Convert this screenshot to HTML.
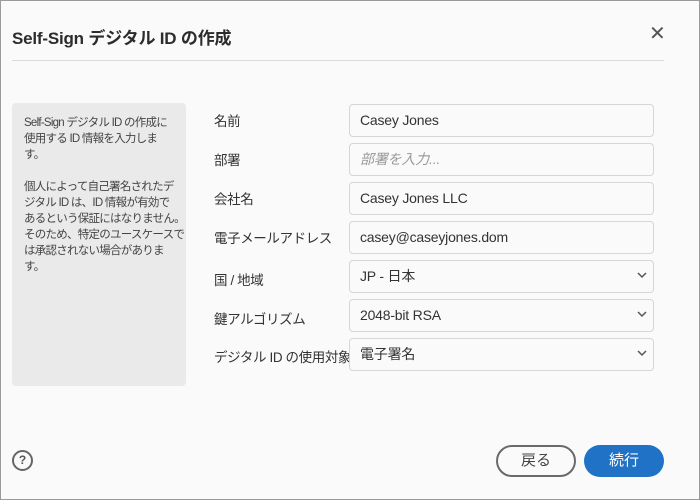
<!DOCTYPE html>
<html><head><meta charset="utf-8"><style>
*{box-sizing:border-box;margin:0;padding:0}
body{width:700px;height:500px;background:#fafafa;font-family:"Liberation Sans","Noto Sans CJK JP",sans-serif;color:#2c2c2c;position:relative;overflow:hidden}
.fr{position:absolute;left:0;top:0;width:700px;height:500px;border:1px solid #9a9a9a}
.t{position:absolute;left:12px;top:24px;font-size:17px;font-weight:bold;color:#2c2c2c;letter-spacing:-0.2px}
.x{position:absolute;left:649px;top:24px;font-size:20px;color:#555;line-height:20px}
.hr{position:absolute;left:12px;top:60px;width:652px;height:1px;background:#dcdcdc}
.p{position:absolute;left:12px;top:103px;width:174px;height:283px;background:#eaeaea;border-radius:4px;padding:12px 0 0 12px;font-size:11.5px;line-height:16px;color:#444;letter-spacing:-0.75px;white-space:nowrap}
.l{position:absolute;left:214px;font-size:13.5px;color:#333;letter-spacing:-0.4px}
.i{position:absolute;left:349px;width:305px;height:33px;border:1px solid #d6d6d6;border-radius:4px;background:#fafafa;font-size:14px;padding-left:10px;line-height:31px;color:#333;letter-spacing:-0.2px}
.i.ph{color:#999;font-style:italic}
.i svg{position:absolute;right:5px;top:8px}
.b{position:absolute;top:445px;height:32px;border-radius:16px;font-size:15px;text-align:center;line-height:28px}
.q{position:absolute;left:12px;top:450px;width:21px;height:21px;border:2px solid #666;border-radius:50%;font-size:12px;text-align:center;line-height:17px;color:#555;font-weight:bold}
</style></head><body>
<div class="fr"></div>
<div class="t">Self-Sign デジタル ID の作成</div>
<div class="x">✕</div>
<div class="hr"></div>
<div class="p">Self-Sign デジタル ID の作成に<br>使用する ID 情報を入力しま<br>す。<br><br>個人によって自己署名されたデ<br>ジタル ID は、ID 情報が有効で<br>あるという保証にはなりません。<br>そのため、特定のユースケースで<br>は承認されない場合がありま<br>す。</div>
<div class="l" style="top:110px">名前</div>
<div class="l" style="top:149px">部署</div>
<div class="l" style="top:188px">会社名</div>
<div class="l" style="top:227px">電子メールアドレス</div>
<div class="l" style="top:269px">国 / 地域</div>
<div class="l" style="top:308px">鍵アルゴリズム</div>
<div class="l" style="top:346px">デジタル ID の使用対象</div>
<div class="i" style="top:104px">Casey Jones</div>
<div class="i ph" style="top:143px">部署を入力...</div>
<div class="i" style="top:182px">Casey Jones LLC</div>
<div class="i" style="top:221px">casey@caseyjones.dom</div>
<div class="i" style="top:260px">JP - 日本<svg width="12" height="12"><path d="M2 4l4 4 4-4" fill="none" stroke="#555" stroke-width="1.5"/></svg></div>
<div class="i" style="top:299px">2048-bit RSA<svg width="12" height="12"><path d="M2 4l4 4 4-4" fill="none" stroke="#555" stroke-width="1.5"/></svg></div>
<div class="i" style="top:338px">電子署名<svg width="12" height="12"><path d="M2 4l4 4 4-4" fill="none" stroke="#555" stroke-width="1.5"/></svg></div>
<div class="q">?</div>
<div class="b" style="left:496px;width:80px;border:2px solid #6a6a6a;color:#444">戻る</div>
<div class="b" style="left:584px;width:80px;background:#1f72c6;color:#fff;line-height:32px">続行</div>
</body></html>
